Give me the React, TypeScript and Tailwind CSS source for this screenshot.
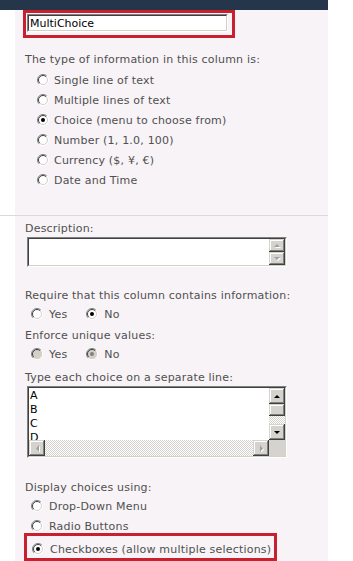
import React from "react";

const FONT = "font-['DejaVu_Sans',_'Verdana',_sans-serif]";

function Radio({ checked = false, disabled = false }: { checked?: boolean; disabled?: boolean }) {
  return (
    <svg width="12" height="12" viewBox="0 0 12 12" className="shrink-0">
      <circle cx="6" cy="6" r="5.5" fill={disabled ? "#d4d0c8" : "#ffffff"} />
      <path d="M 2.1 9.9 A 5.5 5.5 0 0 1 9.9 2.1" fill="none" stroke="#808080" strokeWidth="1" />
      <path d="M 2.8 9.2 A 4.5 4.5 0 0 1 9.2 2.8" fill="none" stroke="#404040" strokeWidth="1" />
      <path d="M 9.9 2.1 A 5.5 5.5 0 0 1 2.1 9.9" fill="none" stroke="#ffffff" strokeWidth="1" />
      <path d="M 9.2 2.8 A 4.5 4.5 0 0 1 2.8 9.2" fill="none" stroke="#d4d0c8" strokeWidth="1" />
      {checked && <circle cx="6" cy="6" r="2" fill={disabled ? "#808080" : "#000000"} />}
    </svg>
  );
}

function Arrow({ dir, disabled = false }: { dir: "up" | "down" | "left" | "right"; disabled?: boolean }) {
  const pts: Record<string, string> = {
    up: "4,1 7,4 1,4",
    down: "1,1 7,1 4,4",
    left: "4,0 4,7 1,3.5",
    right: "1,0 1,7 4,3.5",
  };
  const horiz = dir === "left" || dir === "right";
  return (
    <svg width={horiz ? 5 : 8} height={horiz ? 7 : 5} viewBox={horiz ? "0 0 5 7" : "0 0 8 5"}>
      {disabled && (
        <polygon points={pts[dir]} fill="#ffffff" transform="translate(1,1)" />
      )}
      <polygon points={pts[dir]} fill={disabled ? "#a0a0a0" : "#000000"} />
    </svg>
  );
}

function SButton({ dir, disabled = false, h = 16 }: { dir: "up" | "down" | "left" | "right"; disabled?: boolean; h?: number }) {
  return (
    <div
      className="w-[16px] shrink-0 bg-[#d6d3ce] flex items-center justify-center shadow-[inset_-1px_-1px_#404040,inset_1px_1px_#d6d3ce,inset_-2px_-2px_#808080,inset_2px_2px_#ffffff]"
      style={{ height: h }}
    >
      <Arrow dir={dir} disabled={disabled} />
    </div>
  );
}

const checker =
  "bg-[image:repeating-conic-gradient(#d6d3ce_0%_25%,#ffffff_0%_50%)] bg-[length:2px_2px]";

function Inset({ className = "", children }: { className?: string; children?: React.ReactNode }) {
  return (
    <div className={`border border-t-[#808080] border-l-[#808080] border-b-white border-r-white ${className}`}>
      <div className="w-full h-full border border-t-[#404040] border-l-[#404040] border-b-[#d4d0c8] border-r-[#d4d0c8] bg-white overflow-hidden">
        {children}
      </div>
    </div>
  );
}

function Label({ children, className = "" }: { children: React.ReactNode; className?: string }) {
  return <div className={`h-[14px] leading-[16px] whitespace-nowrap ${className}`}>{children}</div>;
}

export default function App() {
  return (
    <div className={`w-[353px] h-[561px] bg-white overflow-hidden ${FONT} text-[11px] tracking-[0.2px] text-[#505050]`}>
      <div className="w-[328px]">
        <div className="h-[10px] bg-[#26364a]" />

        {/* upper section */}
        <div className="ml-[15px] bg-[#f7f3f6] pb-[25px]">
          <div className="ml-[8px] w-[212px] h-[28px] border-[3px] border-[#c8202f] pl-[1px] pt-[1px]">
            <Inset className="w-[201px] h-[18px]">
              <div className="pl-[1px] leading-[15px] text-black tracking-normal">MultiChoice</div>
            </Inset>
          </div>

          <Label className="mt-[14px] pl-[10px]">The type of information in this column is:</Label>

          <div className="mt-[4px] pl-[22px]">
            {[
              ["Single line of text", false],
              ["Multiple lines of text", false],
              ["Choice (menu to choose from)", true],
              ["Number (1, 1.0, 100)", false],
              ["Currency ($, ¥, €)", false],
              ["Date and Time", false],
            ].map(([t, c]) => (
              <div key={t as string} className="h-[20px] flex items-center">
                <Radio checked={c as boolean} />
                <span className="ml-[5px] pt-[2px] whitespace-nowrap">{t as string}</span>
              </div>
            ))}
          </div>
        </div>

        <div className="h-px bg-[#dcd8db]" />

        {/* lower section */}
        <div className="ml-[15px] bg-[#f7f3f6] pt-[5px] h-[345px]">
          <Label className="pl-[10px]">Description:</Label>
          <Inset className="mt-[2px] ml-[12px] w-[260px] h-[30px]">
            <div className="flex h-full">
              <div className="flex-1" />
              <div className="flex flex-col">
                <SButton dir="up" disabled h={13} />
                <SButton dir="down" disabled h={13} />
              </div>
            </div>
          </Inset>

          <Label className="mt-[21px] pl-[10px]">Require that this column contains information:</Label>
          <div className="mt-[4px] h-[16px] flex items-center pl-[16px]">
            <Radio />
            <span className="ml-[6px] pt-[2px]">Yes</span>
            <span className="ml-[19px] flex items-center">
              <Radio checked />
            </span>
            <span className="ml-[6px] pt-[2px]">No</span>
          </div>

          <Label className="mt-[6px] pl-[10px]">Enforce unique values:</Label>
          <div className="mt-[4px] h-[16px] flex items-center pl-[16px]">
            <Radio disabled />
            <span className="ml-[6px] pt-[2px]">Yes</span>
            <span className="ml-[19px] flex items-center">
              <Radio checked disabled />
            </span>
            <span className="ml-[6px] pt-[2px]">No</span>
          </div>

          <Label className="mt-[8px] pl-[10px]">Type each choice on a separate line:</Label>
          <Inset className="mt-[2px] ml-[12px] w-[260px] h-[72px]">
            <div className="flex flex-col h-full">
              <div className="flex h-[52px]">
                <div className="flex-1 pl-[1px] pt-[1px] text-black leading-[14px] tracking-normal overflow-hidden">
                  <div>A</div>
                  <div>B</div>
                  <div>C</div>
                  <div>D</div>
                </div>
                <div className="flex flex-col w-[16px]">
                  <SButton dir="up" h={16} />
                  <div className="h-[12px] bg-[#d6d3ce] shadow-[inset_-1px_-1px_#404040,inset_1px_1px_#d6d3ce,inset_-2px_-2px_#808080,inset_2px_2px_#ffffff]" />
                  <div className={`flex-1 ${checker}`} />
                  <SButton dir="down" h={16} />
                </div>
              </div>
              <div className="flex h-[16px]">
                <SButton dir="left" disabled h={16} />
                <div className={`flex-1 ${checker}`} />
                <SButton dir="right" disabled h={16} />
                <div className="w-[16px] bg-[#d6d3ce]" />
              </div>
            </div>
          </Inset>

          <Label className="mt-[22px] pl-[10px]">Display choices using:</Label>
          <div className="mt-[4px] h-[16px] flex items-center pl-[16px]">
            <Radio />
            <span className="ml-[6px] pt-[2px]">Drop-Down Menu</span>
          </div>
          <div className="mt-[5px] h-[14px] flex items-center pl-[16px]">
            <Radio />
            <span className="ml-[6px] pt-[2px]">Radio Buttons</span>
          </div>
          <div className="ml-[9px] w-[253px] h-[28px] border-[3px] border-[#c8202f] pl-[5px] pt-[5px]">
            <div className="h-[16px] flex items-center">
              <Radio checked />
              <span className="ml-[6px] pt-[2px] whitespace-nowrap">Checkboxes (allow multiple selections)</span>
            </div>
          </div>
        </div>
      </div>
    </div>
  );
}
